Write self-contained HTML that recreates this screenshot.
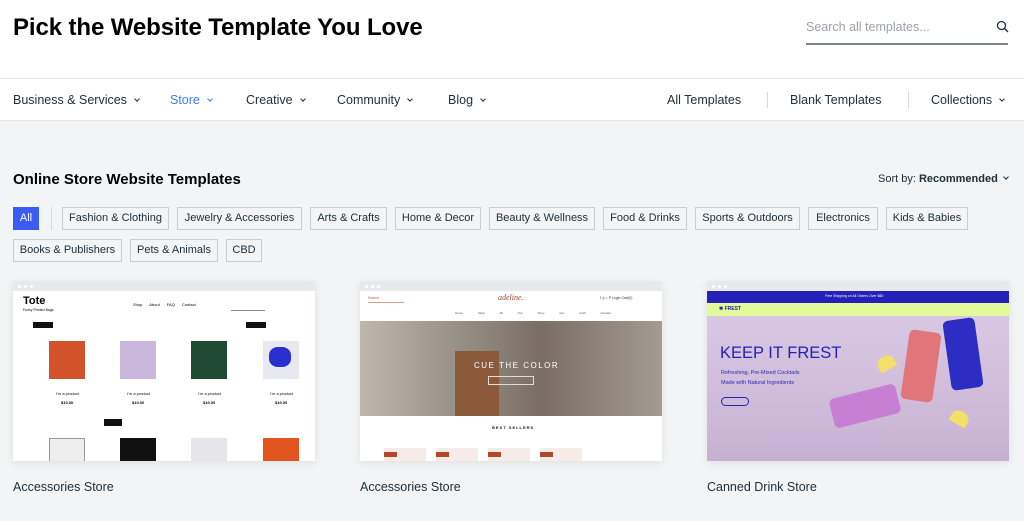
<!DOCTYPE html>
<html><head><meta charset="utf-8"><style>
*{margin:0;padding:0;box-sizing:border-box}
body{width:1024px;height:521px;overflow:hidden;background:#f2f4f5;font-family:"Liberation Sans",sans-serif;color:#20303c;position:relative}
.a{position:absolute;white-space:nowrap}
.hdr{position:absolute;left:0;top:0;width:1024px;height:121px;background:#fff;border-bottom:1px solid #e6e9eb}
.nav{font-size:12.5px;color:#20303c;top:93px}
.chev{display:inline-block;width:4px;height:4px;border-right:1.1px solid currentColor;border-bottom:1.1px solid currentColor;transform:rotate(45deg);margin-left:8px;position:relative;top:-3px}
.chip{position:absolute;height:23px;border:1px solid #c9cdd0;background:#f2f4f5;font-size:11px;line-height:21px;text-align:center;color:#20303c}
.card{position:absolute;top:281px;width:302px;height:180px;background:#fff;box-shadow:0 2px 8px rgba(0,0,0,.08);overflow:hidden}
.bar{height:10px;background:#e8e9ea;position:relative}
.bar i{position:absolute;top:4px;width:3px;height:3px;border-radius:50%;background:#fff}
.lbl{font-size:12.5px;top:480px;color:#20303c}
.bag{position:absolute;width:36px;height:38px}
</style></head><body>
<div class="hdr"></div>
<div style="position:absolute;left:0;top:78px;width:1024px;height:1px;background:#e6e9eb"></div>
<div class="a" style="left:13px;top:14px;font-size:24px;font-weight:bold;color:#000;letter-spacing:-0.1px">Pick the Website Template You Love</div>
<div class="a" style="left:806px;top:20px;font-size:12.5px;color:#9aa2a8">Search all templates...</div>
<svg class="a" style="left:996px;top:20px" width="13" height="13" viewBox="0 0 13 13"><circle cx="5.5" cy="5.5" r="4" fill="none" stroke="#20303c" stroke-width="1.3"/><line x1="8.5" y1="8.5" x2="12" y2="12" stroke="#20303c" stroke-width="1.3"/></svg>
<div class="a" style="left:806px;top:43px;width:202px;height:1.5px;background:#7d868c"></div>

<div class="a nav" style="left:13px">Business &amp; Services<span class="chev"></span></div>
<div class="a nav" style="left:170px;color:#3b7cff">Store<span class="chev"></span></div>
<div class="a nav" style="left:246px">Creative<span class="chev"></span></div>
<div class="a nav" style="left:337px">Community<span class="chev"></span></div>
<div class="a nav" style="left:448px">Blog<span class="chev"></span></div>
<div class="a nav" style="left:667px">All Templates</div>
<div class="a" style="left:767px;top:92px;width:1px;height:16px;background:#d5d9dc"></div>
<div class="a nav" style="left:790px">Blank Templates</div>
<div class="a" style="left:908px;top:92px;width:1px;height:16px;background:#d5d9dc"></div>
<div class="a nav" style="left:931px">Collections<span class="chev"></span></div>

<div class="a" style="left:13px;top:171px;font-size:15px;font-weight:bold;color:#000">Online Store Website Templates</div>
<div class="a" style="left:878px;top:173px;font-size:11px;color:#20303c">Sort by: <b>Recommended</b><span class="chev" style="margin-left:6px"></span></div>

<div class="chip" style="left:13px;top:207px;width:26px;background:#3a5cf5;border-color:#3a5cf5;color:#fff">All</div>
<div class="a" style="left:51px;top:207px;width:1px;height:23px;background:#d5d9dc"></div>
<div class="chip" style="left:62px;top:207px;width:107px">Fashion &amp; Clothing</div>
<div class="chip" style="left:177px;top:207px;width:125px">Jewelry &amp; Accessories</div>
<div class="chip" style="left:310px;top:207px;width:77px">Arts &amp; Crafts</div>
<div class="chip" style="left:395px;top:207px;width:86px">Home &amp; Decor</div>
<div class="chip" style="left:489px;top:207px;width:106px">Beauty &amp; Wellness</div>
<div class="chip" style="left:603px;top:207px;width:84px">Food &amp; Drinks</div>
<div class="chip" style="left:695px;top:207px;width:105px">Sports &amp; Outdoors</div>
<div class="chip" style="left:808px;top:207px;width:70px">Electronics</div>
<div class="chip" style="left:886px;top:207px;width:82px">Kids &amp; Babies</div>
<div class="chip" style="left:13px;top:239px;width:109px">Books &amp; Publishers</div>
<div class="chip" style="left:130px;top:239px;width:88px">Pets &amp; Animals</div>
<div class="chip" style="left:226px;top:239px;width:36px">CBD</div>

<!-- card 1 -->
<div class="card" style="left:13px">
 <div class="bar"><i style="left:5px"></i><i style="left:11px"></i><i style="left:17px"></i></div>
 <div class="a" style="left:10px;top:14px;font-size:11px;font-weight:bold;color:#000">Tote</div>
 <div class="a" style="left:10px;top:27px;font-size:3.5px;color:#000">Funky Printed Bags</div>
 <div class="a" style="left:120px;top:21px;font-size:4px;color:#000;word-spacing:6px">Shop About FAQ Contact</div>
 <div class="a" style="left:218px;top:29px;width:34px;height:1px;background:#888"></div>
 <div class="a" style="left:20px;top:41px;width:20px;height:6px;background:#111"></div>
 <div class="a" style="left:233px;top:41px;width:20px;height:6px;background:#111"></div>
 <div class="bag" style="left:36px;top:60px;background:#d2532a"></div>
 <div class="bag" style="left:107px;top:60px;background:#c9b7dc"></div>
 <div class="bag" style="left:178px;top:60px;background:#1f4a34"></div>
 <div class="bag" style="left:250px;top:60px;background:#e8e8f0"><div style="margin:6px;width:22px;height:20px;background:#2a2fd0;border-radius:40%"></div></div>
 <div class="a" style="left:43px;top:110px;font-size:4px;color:#000">I'm a product</div>
 <div class="a" style="left:114px;top:110px;font-size:4px;color:#000">I'm a product</div>
 <div class="a" style="left:185px;top:110px;font-size:4px;color:#000">I'm a product</div>
 <div class="a" style="left:257px;top:110px;font-size:4px;color:#000">I'm a product</div>
 <div class="a" style="left:48px;top:119px;font-size:4px;font-weight:bold;color:#000">$10.00</div>
 <div class="a" style="left:119px;top:119px;font-size:4px;font-weight:bold;color:#000">$10.00</div>
 <div class="a" style="left:190px;top:119px;font-size:4px;font-weight:bold;color:#000">$10.00</div>
 <div class="a" style="left:262px;top:119px;font-size:4px;font-weight:bold;color:#000">$10.00</div>
 <div class="a" style="left:91px;top:138px;width:18px;height:7px;background:#111"></div>
 <div class="bag" style="left:36px;top:157px;background:#eee;border:1px solid #999"></div>
 <div class="bag" style="left:107px;top:157px;background:#111"></div>
 <div class="bag" style="left:178px;top:157px;background:#e6e6ea"></div>
 <div class="bag" style="left:250px;top:157px;background:#e2551f"></div>
</div>
<div class="a lbl" style="left:13px">Accessories Store</div>

<!-- card 2 -->
<div class="card" style="left:360px">
 <div class="bar"><i style="left:5px"></i><i style="left:11px"></i><i style="left:17px"></i></div>
 <div class="a" style="left:8px;top:15px;font-size:3.5px;color:#b5583b">Search</div>
 <div class="a" style="left:8px;top:21px;width:36px;height:1px;background:#d9a090"></div>
 <div class="a" style="left:138px;top:12px;font-size:8px;font-style:italic;color:#9b4a30;font-family:'Liberation Serif',serif">adeline.</div>
 <div class="a" style="left:240px;top:15px;font-size:3.5px;color:#333">f ◎ ♪ P  Login  Cart(0)</div>
 <div class="a" style="left:95px;top:30px;font-size:3px;color:#555;word-spacing:14px">Home Shop All Our Story Our Craft Contact</div>
 <div class="a" style="left:0;top:40px;width:302px;height:95px;background:linear-gradient(90deg,#bdb7ad,#8f877d 40%,#7a6e62 60%,#a39b91)"></div>
 <div class="a" style="left:95px;top:70px;width:44px;height:65px;background:#8a5a3a"></div>
 <div class="a" style="left:114px;top:80px;font-size:8px;color:#fff;letter-spacing:1.5px">CUE THE COLOR</div>
 <div class="a" style="left:128px;top:95px;width:46px;height:9px;border:1px solid #ddd"></div>
 <div class="a" style="left:132px;top:144px;font-size:4px;font-weight:bold;color:#111;letter-spacing:1px">BEST SELLERS</div>
 <div class="a" style="left:24px;top:167px;width:42px;height:13px;background:#f5ecea"></div>
 <div class="a" style="left:76px;top:167px;width:42px;height:13px;background:#f5ecea"></div>
 <div class="a" style="left:128px;top:167px;width:42px;height:13px;background:#f5ecea"></div>
 <div class="a" style="left:180px;top:167px;width:42px;height:13px;background:#f5ecea"></div>
 <div class="a" style="left:24px;top:171px;width:13px;height:5px;background:#b5482a"></div>
 <div class="a" style="left:76px;top:171px;width:13px;height:5px;background:#b5482a"></div>
 <div class="a" style="left:128px;top:171px;width:13px;height:5px;background:#b5482a"></div>
 <div class="a" style="left:180px;top:171px;width:13px;height:5px;background:#b5482a"></div>
</div>
<div class="a lbl" style="left:360px">Accessories Store</div>

<!-- card 3 -->
<div class="card" style="left:707px;background:#d4c3dc">
 <div class="bar"><i style="left:5px"></i><i style="left:11px"></i><i style="left:17px"></i></div>
 <div class="a" style="left:0;top:10px;width:302px;height:12px;background:#2321b8"></div>
 <div class="a" style="left:118px;top:13px;font-size:3.5px;color:#fff">Free Shipping on All Orders Over $60</div>
 <div class="a" style="left:0;top:22px;width:302px;height:13px;background:#e4f99a"></div>
 <div class="a" style="left:12px;top:25px;font-size:5px;font-weight:bold;color:#2321b8">✱ FREST</div>
 <div class="a" style="left:0;top:35px;width:302px;height:145px;background:linear-gradient(180deg,#d8c8e2,#cbb7d6 80%,#c4b0cf)"></div>
 <div class="a" style="left:13px;top:63px;font-size:16.5px;color:#2321b8">KEEP IT FREST</div>
 <div class="a" style="left:14px;top:87px;font-size:5.5px;line-height:10px;color:#2a2ab8">Refreshing, Pre-Mixed Cocktails<br>Made with Natural Ingredients</div>
 <div class="a" style="left:14px;top:116px;width:28px;height:9px;border:1px solid #2321b8;border-radius:5px"></div>
 <div class="a" style="left:198px;top:50px;width:32px;height:70px;background:#e0757a;border-radius:5px;transform:rotate(8deg)"></div>
 <div class="a" style="left:240px;top:38px;width:32px;height:70px;background:#2d2dc4;border-radius:5px;transform:rotate(-8deg)"></div>
 <div class="a" style="left:124px;top:110px;width:68px;height:30px;background:#c77fd3;border-radius:5px;transform:rotate(-14deg)"></div>
 <div class="a" style="left:170px;top:75px;width:18px;height:14px;background:#f3df6a;border-radius:50% 50% 0 0;transform:rotate(-30deg)"></div>
 <div class="a" style="left:244px;top:130px;width:18px;height:14px;background:#f3df6a;border-radius:50% 50% 0 0;transform:rotate(30deg)"></div>
</div>
<div class="a lbl" style="left:707px">Canned Drink Store</div>
</body></html>
